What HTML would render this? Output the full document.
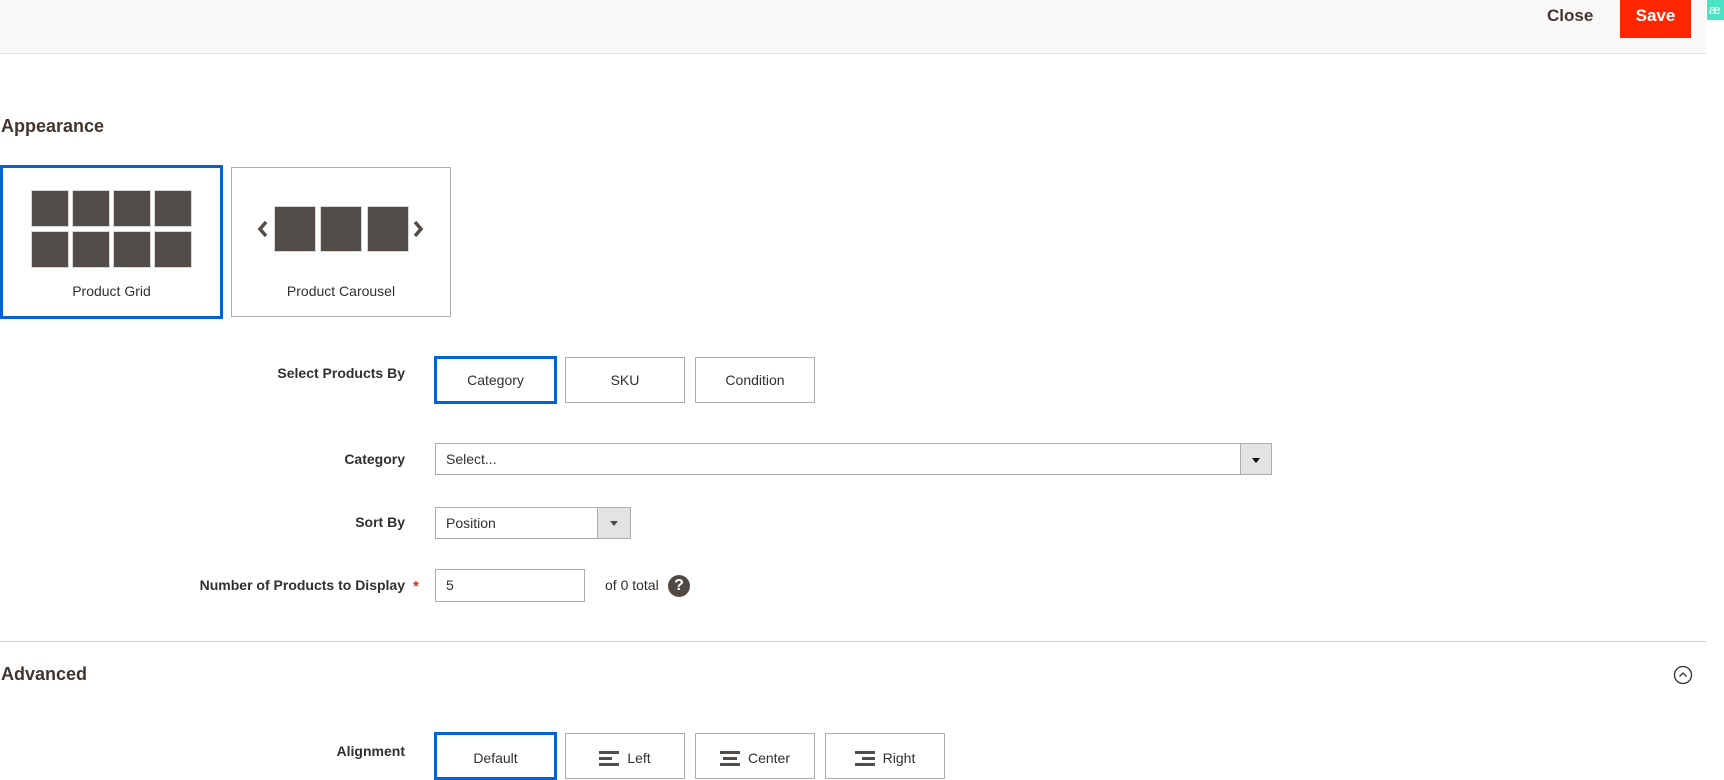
<!DOCTYPE html>
<html><head><meta charset="utf-8"><style>
*{box-sizing:border-box;margin:0;padding:0}
body{width:1724px;height:769px;overflow:hidden;background:#fff;font-family:"Liberation Sans",sans-serif;color:#303030;position:relative}
.a{position:absolute}
.hdr{left:0;top:0;width:1706px;height:54px;background:#f8f8f8;border-bottom:1px solid #e3e3e3}
.lbl{font-weight:bold;font-size:14px;color:#303030;text-align:right;width:300px}
.btn{position:absolute;border:1px solid #adadad;background:#fff;font-size:14px;color:#303030;display:flex;align-items:center;justify-content:center}
.sel{border:3px solid #0061d9}
.sq{position:absolute;background:#524d49;outline:1px solid #d8d6d4}
.ln{position:absolute;height:3px;background:#524d49}
</style></head><body>
<div class="a hdr"></div>
<div class="a" style="left:1547px;top:6px;font-size:17px;font-weight:bold;color:#41362f">Close</div>
<div class="a" style="left:1620px;top:0;width:71px;height:38px;background:#ff2600;color:#fff;font-size:17px;font-weight:bold;display:flex;align-items:center;justify-content:center;padding-bottom:6px">Save</div>
<div class="a" style="left:1707px;top:0;width:17px;height:20px;background:#4be3c6;color:#fff;font-size:13px;line-height:20px;padding-left:2px">æ</div>

<div class="a" style="left:1px;top:116px;font-size:18px;font-weight:bold;color:#41362f">Appearance</div>

<div class="a" style="left:0;top:165px;width:223px;height:154px;border:3px solid #0061d9"></div>
<div class="sq" style="left:32px;top:191px;width:36px;height:35px"></div>
<div class="sq" style="left:73px;top:191px;width:36px;height:35px"></div>
<div class="sq" style="left:114px;top:191px;width:36px;height:35px"></div>
<div class="sq" style="left:155px;top:191px;width:36px;height:35px"></div>
<div class="sq" style="left:32px;top:232px;width:36px;height:35px"></div>
<div class="sq" style="left:73px;top:232px;width:36px;height:35px"></div>
<div class="sq" style="left:114px;top:232px;width:36px;height:35px"></div>
<div class="sq" style="left:155px;top:232px;width:36px;height:35px"></div>
<div class="a" style="left:0;top:283px;width:223px;text-align:center;font-size:14px">Product Grid</div>

<div class="a" style="left:231px;top:167px;width:220px;height:150px;border:1px solid #adadad"></div>
<div class="sq" style="left:275px;top:207px;width:40px;height:44px"></div>
<div class="sq" style="left:321px;top:207px;width:40px;height:44px"></div>
<div class="sq" style="left:368px;top:207px;width:40px;height:44px"></div>
<svg class="a" style="left:256px;top:219px" width="14" height="20"><path d="M10 3 L4 10 L10 17" stroke="#524d49" stroke-width="3.5" fill="none"/></svg>
<svg class="a" style="left:411px;top:219px" width="14" height="20"><path d="M4 3 L10 10 L4 17" stroke="#524d49" stroke-width="3.5" fill="none"/></svg>
<div class="a" style="left:231px;top:283px;width:220px;text-align:center;font-size:14px">Product Carousel</div>

<div class="a lbl" style="left:105px;top:365px">Select Products By</div>
<div class="btn sel" style="left:434px;top:356px;width:123px;height:48px">Category</div>
<div class="btn" style="left:565px;top:357px;width:120px;height:46px">SKU</div>
<div class="btn" style="left:695px;top:357px;width:120px;height:46px">Condition</div>

<div class="a lbl" style="left:105px;top:451px">Category</div>
<div class="a" style="left:435px;top:443px;width:837px;height:32px;border:1px solid #adadad;font-size:14px;padding:7px 10px">Select...</div>
<div class="a" style="left:1240px;top:443px;width:32px;height:32px;border:1px solid #adadad;background:#e3e3e3"></div>
<div class="a" style="left:1252px;top:458px;border-left:4px solid transparent;border-right:4px solid transparent;border-top:5px solid #000"></div>

<div class="a lbl" style="left:105px;top:514px">Sort By</div>
<div class="a" style="left:435px;top:507px;width:196px;height:32px;border:1px solid #adadad;font-size:14px;padding:7px 10px">Position</div>
<div class="a" style="left:597px;top:507px;width:34px;height:32px;border:1px solid #adadad;background:#e3e3e3"></div>
<div class="a" style="left:610px;top:521px;border-left:4px solid transparent;border-right:4px solid transparent;border-top:5px solid #514943"></div>

<div class="a lbl" style="left:105px;top:577px">Number of Products to Display</div>
<div class="a" style="left:413px;top:578px;color:#e22626;font-size:15px;font-weight:bold">*</div>
<div class="a" style="left:435px;top:569px;width:150px;height:33px;border:1px solid #adadad;font-size:14px;padding:7px 10px">5</div>
<div class="a" style="left:605px;top:577px;font-size:14px">of 0 total</div>
<div class="a" style="left:668px;top:575px;width:22px;height:22px;border-radius:50%;background:#514943;color:#fff;font-weight:bold;font-size:16px;text-align:center;line-height:22px">?</div>

<div class="a" style="left:0;top:641px;width:1706px;height:1px;background:#cccccc"></div>
<div class="a" style="left:1px;top:664px;font-size:18px;font-weight:bold;color:#41362f">Advanced</div>
<svg class="a" style="left:1673px;top:665px" width="20" height="20"><circle cx="10" cy="10" r="8.5" stroke="#303030" stroke-width="1.3" fill="none"/><path d="M6.5 11.5 L10 8 L13.5 11.5" stroke="#303030" stroke-width="1.3" fill="none"/></svg>

<div class="a lbl" style="left:105px;top:743px">Alignment</div>
<div class="btn sel" style="left:434px;top:732px;width:123px;height:48px;padding-top:4px">Default</div>
<div class="btn" style="left:565px;top:733px;width:120px;height:46px;padding-top:4px"><span style="display:inline-block;width:20px;height:14px;margin-right:8px;position:relative"><i class="ln" style="left:0;top:0;width:20px"></i><i class="ln" style="left:0;top:6px;width:13px"></i><i class="ln" style="left:0;top:12px;width:20px"></i></span>Left</div>
<div class="btn" style="left:695px;top:733px;width:120px;height:46px;padding-top:4px"><span style="display:inline-block;width:20px;height:14px;margin-right:8px;position:relative"><i class="ln" style="left:0;top:0;width:20px"></i><i class="ln" style="left:3px;top:6px;width:14px"></i><i class="ln" style="left:0;top:12px;width:20px"></i></span>Center</div>
<div class="btn" style="left:825px;top:733px;width:120px;height:46px;padding-top:4px"><span style="display:inline-block;width:20px;height:14px;margin-right:8px;position:relative"><i class="ln" style="left:0;top:0;width:20px"></i><i class="ln" style="left:7px;top:6px;width:13px"></i><i class="ln" style="left:0;top:12px;width:20px"></i></span>Right</div>
</body></html>
